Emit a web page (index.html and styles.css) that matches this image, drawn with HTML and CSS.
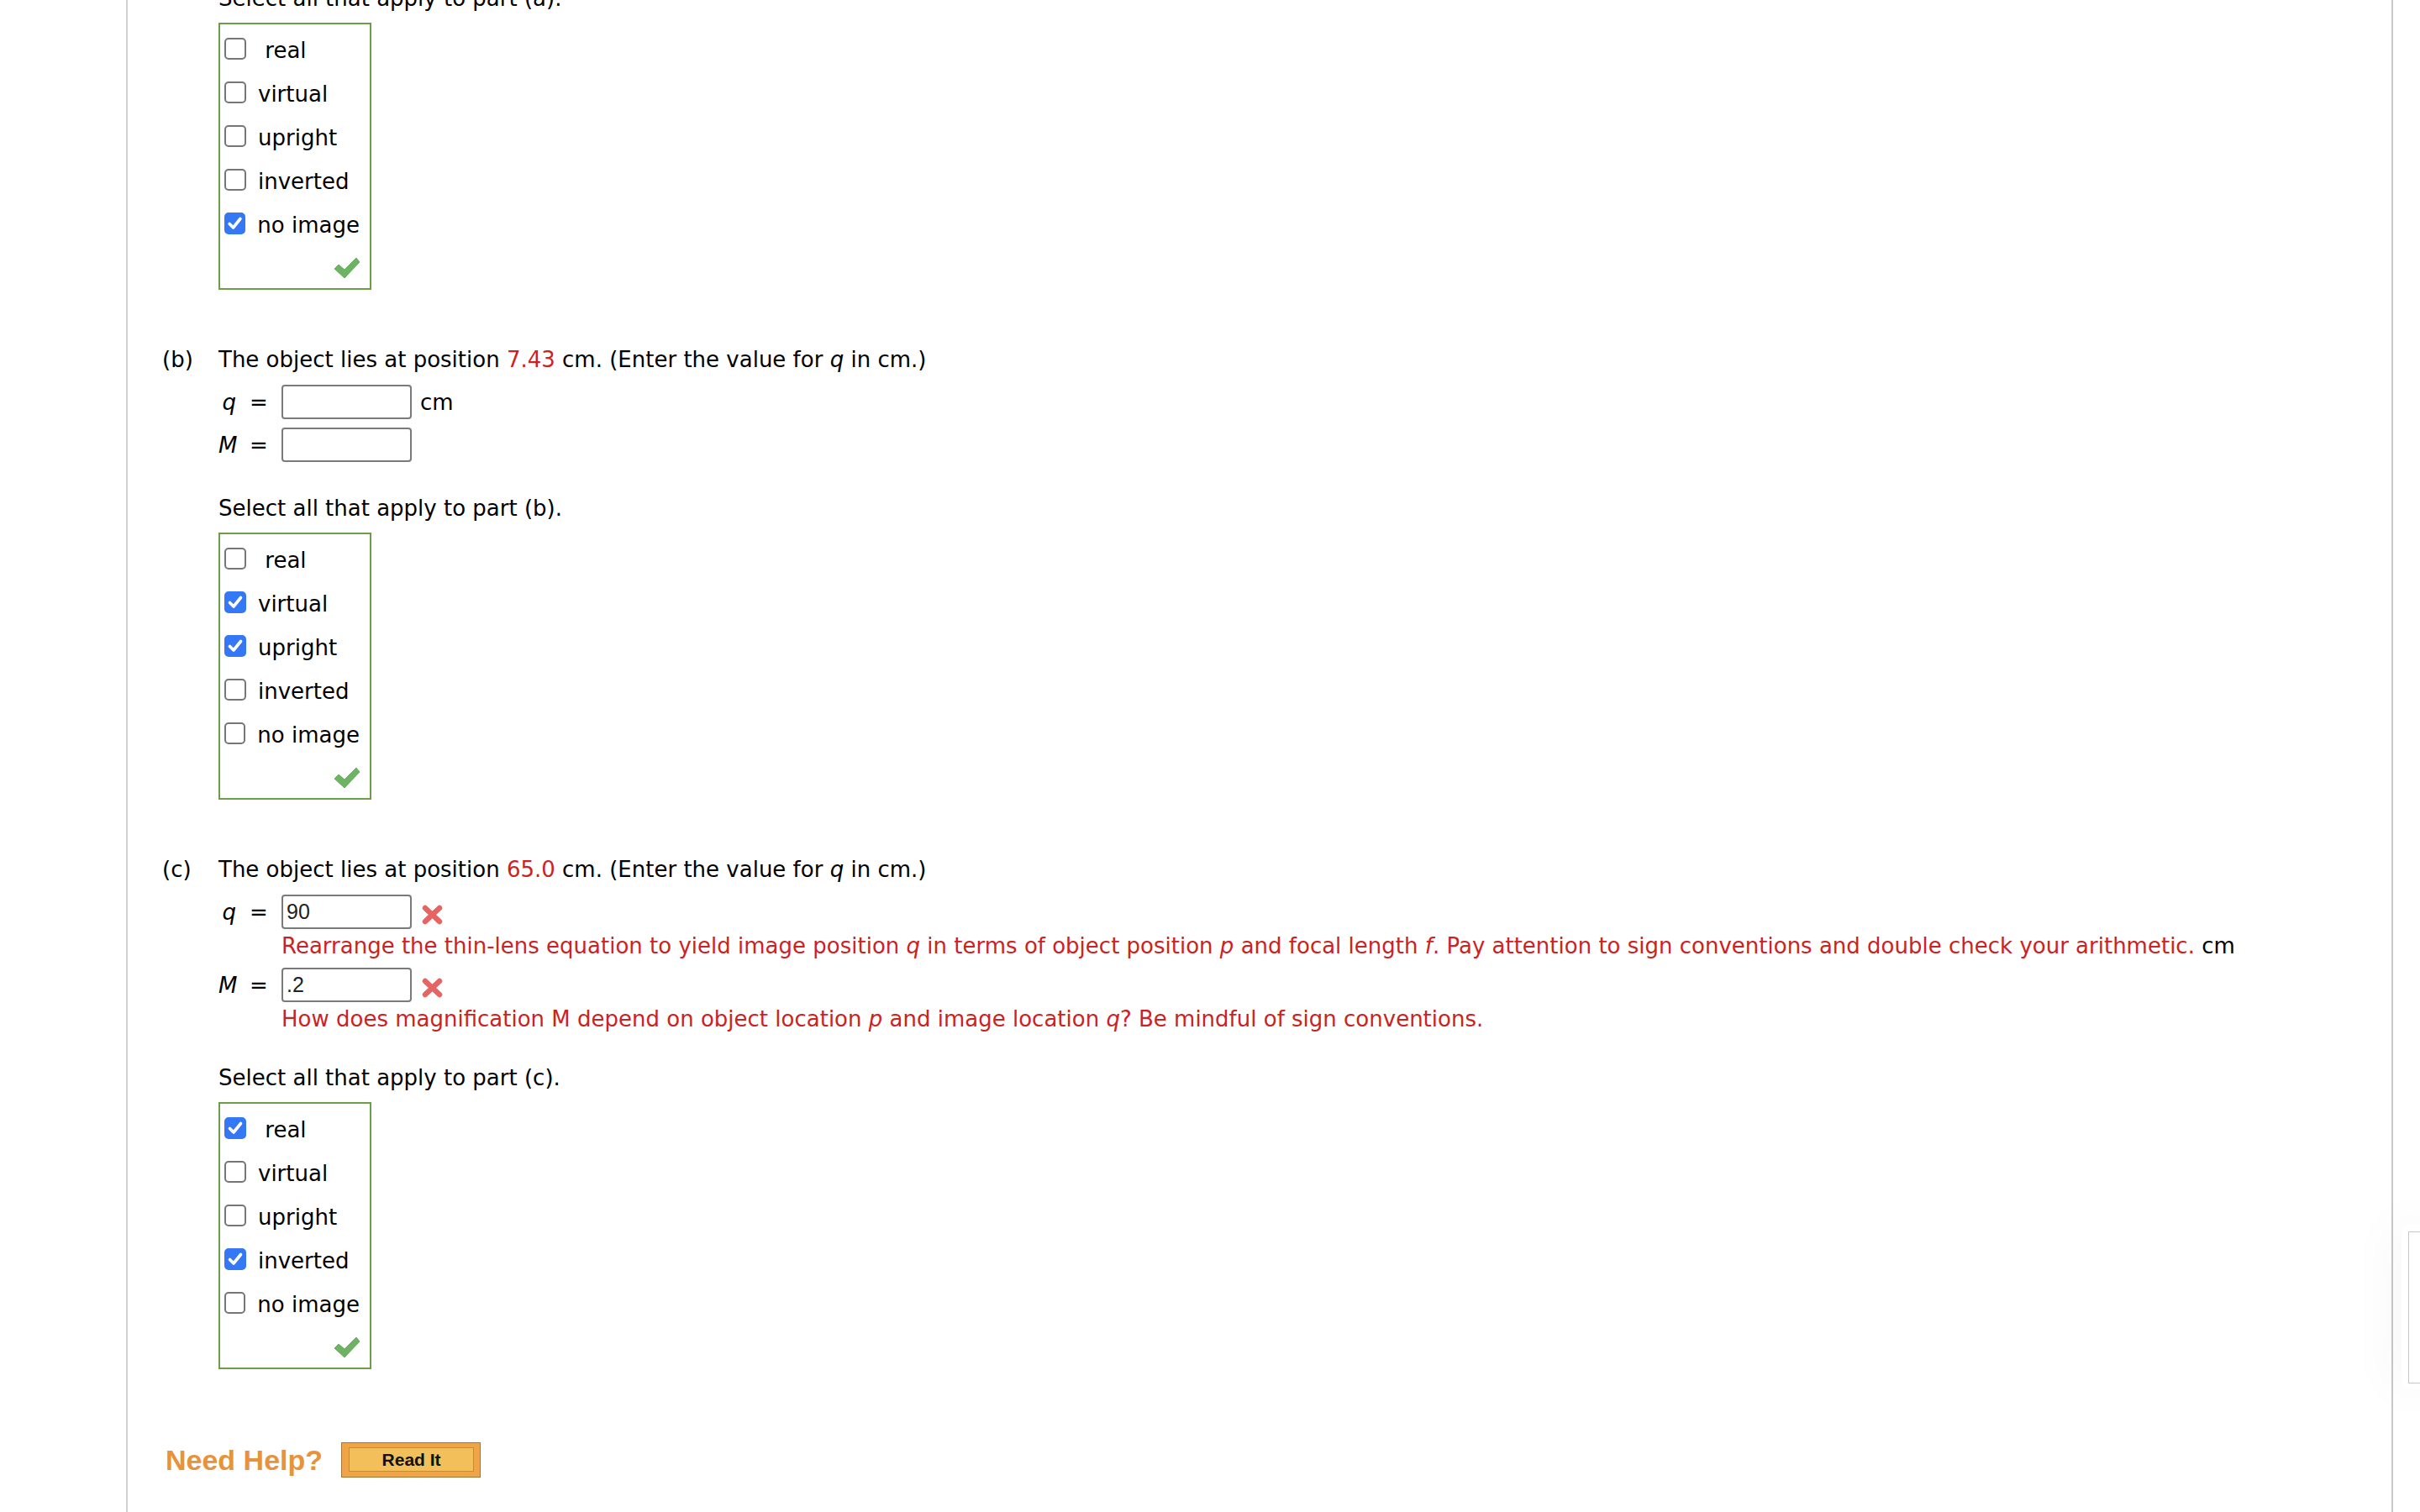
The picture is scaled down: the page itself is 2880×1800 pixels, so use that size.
FILE: index.html
```html
<!DOCTYPE html>
<html lang="en">
<head>
    <meta charset="UTF-8">
    <meta name="viewport" content="width=device-width, initial-scale=1.0">
    <title>Thin Lens - Images</title>
    <link rel="stylesheet" href="styles.css">
</head>
<body>
    <div class="page">

        <div class="part part-a">
            <div class="num"></div>
            <div class="body">
                <p class="line">Select all that apply to part (a).</p>
                <div class="choices">
                    <label class="choice"><input type="checkbox"><span>&nbsp;real</span></label>
                    <label class="choice"><input type="checkbox"><span>virtual</span></label>
                    <label class="choice"><input type="checkbox"><span>upright</span></label>
                    <label class="choice"><input type="checkbox"><span>inverted</span></label>
                    <label class="choice"><input type="checkbox" checked><span>no image</span></label>
                    <div class="mark-row">
                        <svg class="ok" width="30" height="25" viewBox="0 0 30 25"><path d="M0 14 L5 9 L12 15 L26 1 L30 6 L12 25 Z"/></svg>
                    </div>
                </div>
            </div>
        </div>

        <div class="part">
            <div class="num line">(b)</div>
            <div class="body">
                <p class="line">The object lies at position <span class="val">7.43</span> cm. (Enter the value for <i>q</i> in cm.)</p>
                <div class="answer">
                    <span class="var">q</span><span class="eq">=</span><input class="ans" type="text"><span class="unit">cm</span>
                </div>
                <div class="answer">
                    <span class="var">M</span><span class="eq">=</span><input class="ans" type="text">
                </div>
                <p class="line select">Select all that apply to part (b).</p>
                <div class="choices">
                    <label class="choice"><input type="checkbox"><span>&nbsp;real</span></label>
                    <label class="choice"><input type="checkbox" checked><span>virtual</span></label>
                    <label class="choice"><input type="checkbox" checked><span>upright</span></label>
                    <label class="choice"><input type="checkbox"><span>inverted</span></label>
                    <label class="choice"><input type="checkbox"><span>no image</span></label>
                    <div class="mark-row">
                        <svg class="ok" width="30" height="25" viewBox="0 0 30 25"><path d="M0 14 L5 9 L12 15 L26 1 L30 6 L12 25 Z"/></svg>
                    </div>
                </div>
            </div>
        </div>

        <div class="part">
            <div class="num line">(c)</div>
            <div class="body">
                <p class="line">The object lies at position <span class="val">65.0</span> cm. (Enter the value for <i>q</i> in cm.)</p>
                <div class="answer">
                    <span class="var">q</span><span class="eq">=</span><input class="ans" type="text" value="90">
                    <svg class="bad" width="27" height="26" viewBox="0 0 27 26"><path d="M5 5 L22 21 M22 5 L5 21"/></svg>
                </div>
                <p class="line hint">Rearrange the thin-lens equation to yield image position <i>q</i> in terms of object position <i>p</i> and focal length <i>f</i>. Pay attention to sign conventions and double check your arithmetic.<span class="unit-inline"> cm</span></p>
                <div class="answer">
                    <span class="var">M</span><span class="eq">=</span><input class="ans" type="text" value=".2">
                    <svg class="bad" width="27" height="26" viewBox="0 0 27 26"><path d="M5 5 L22 21 M22 5 L5 21"/></svg>
                </div>
                <p class="line hint">How does magnification M depend on object location <i>p</i> and image location <i>q</i>? Be mindful of sign conventions.</p>
                <p class="line select">Select all that apply to part (c).</p>
                <div class="choices">
                    <label class="choice"><input type="checkbox" checked><span>&nbsp;real</span></label>
                    <label class="choice"><input type="checkbox"><span>virtual</span></label>
                    <label class="choice"><input type="checkbox"><span>upright</span></label>
                    <label class="choice"><input type="checkbox" checked><span>inverted</span></label>
                    <label class="choice"><input type="checkbox"><span>no image</span></label>
                    <div class="mark-row">
                        <svg class="ok" width="30" height="25" viewBox="0 0 30 25"><path d="M0 14 L5 9 L12 15 L26 1 L30 6 L12 25 Z"/></svg>
                    </div>
                </div>
            </div>
        </div>

        <div class="help">
            <span class="help-text">Need Help?</span>
            <button class="read-it"><span>Read It</span></button>
        </div>
    </div>

    <div class="side-card"><div class="side-inner"></div></div>
</body>
</html>
```

FILE: styles.css
```css
html, body {
    overflow: hidden;
}
body {
    margin: 0;
    background: #fff;
    color: #000;
    font-family: "DejaVu Sans", Verdana, sans-serif;
    font-size: 26px;
}
.page {
    display: flow-root;
    margin-left: 150px;
    width: 2698px;
    min-height: 100vh;
    padding-left: 41px;
    box-sizing: border-box;
    border-left: 2px solid #d2d2d2;
    border-right: 2px solid #c8c8c8;
}
.line {
    margin: 0;
    line-height: 40px;
}
.part {
    display: grid;
    grid-template-columns: 67px 1fr;
}
.part + .part {
    margin-top: 63px;
}
.part-a {
    margin-top: -22px;
}
.val {
    color: #cc2222;
}

/* answer rows */
.answer {
    display: flex;
    align-items: center;
    height: 41px;
    margin-top: 10px;
}
.hint + .answer {
    margin-top: 6px;
}
.var {
    width: 21px;
    text-align: right;
    font-style: italic;
}
.eq {
    width: 54px;
    text-align: center;
}
.ans {
    width: 155px;
    height: 41px;
    box-sizing: border-box;
    margin: 0;
    padding: 0 4px;
    border: 2px solid #7a7a7a;
    border-radius: 4px;
    font-family: "Liberation Sans", Arial, sans-serif;
    font-size: 25px;
    color: #222;
    background: #fff;
}
.unit {
    margin-left: 10px;
}
.bad {
    margin-left: 11px;
    margin-top: 6px;
}
.bad path {
    stroke: #e56464;
    stroke-width: 6.5;
    stroke-linecap: round;
    fill: none;
}
.hint {
    margin-left: 75px;
    color: #cc2222;
}
.unit-inline {
    color: #000;
}
.select {
    margin-top: 35px;
}
.hint + .select {
    margin-top: 30px;
}

/* checkbox groups */
.choices {
    width: 182px;
    box-sizing: border-box;
    margin-top: 9px;
    padding: 5px 12px 12px 5px;
    border: 2px solid #6b9e47;
}
.choice {
    display: flex;
    align-items: center;
    gap: 14px;
    height: 52px;
    white-space: nowrap;
}
.choice input {
    appearance: none;
    -webkit-appearance: none;
    width: 26px;
    height: 26px;
    margin: 0 0 5px 0;
    border: 2px solid #767676;
    border-radius: 5px;
    background: #fff;
    box-sizing: border-box;
}
.choice input:checked {
    border-color: #3478f6;
    background: #3478f6 url("data:image/svg+xml,%3Csvg xmlns='http://www.w3.org/2000/svg' viewBox='0 0 26 26'%3E%3Cpath d='M6.5 13.5 L11 18 L19.5 7.5' fill='none' stroke='white' stroke-width='3.6' stroke-linecap='round' stroke-linejoin='round'/%3E%3C/svg%3E") center / 26px 26px no-repeat;
}
.mark-row {
    display: flex;
    justify-content: flex-end;
    margin-top: 12px;
    height: 25px;
}
.ok path {
    fill: #6cb462;
    stroke: #5aa151;
    stroke-width: 0.8;
}

/* need help */
.help {
    display: flex;
    align-items: center;
    gap: 22px;
    margin-top: 87px;
    padding-left: 4px;
}
.help-text {
    font-family: "Liberation Sans", Arial, sans-serif;
    font-weight: bold;
    font-size: 34px;
    color: #e8923b;
}
.read-it {
    width: 166px;
    height: 42px;
    padding: 5px 7px 6px 8px;
    box-sizing: border-box;
    border: 1px solid #a97536;
    background: #f0a448;
    cursor: pointer;
}
.read-it span {
    display: block;
    height: 29px;
    line-height: 27px;
    box-sizing: border-box;
    border: 1px solid #c48a3e;
    background: #f3bf5b;
    font-family: "Liberation Sans", Arial, sans-serif;
    font-weight: bold;
    font-size: 21px;
    color: #111;
    text-align: center;
}

/* card peeking in at the right edge */
.side-card {
    position: absolute;
    top: 1458px;
    right: 0;
    width: 22px;
    height: 195px;
    padding: 8px 0 8px 8px;
    box-sizing: border-box;
    background: #fff;
    border-radius: 10px 0 0 10px;
    box-shadow: 0 0 60px rgba(0, 0, 0, 0.08);
}
.side-inner {
    height: 100%;
    border: 1px solid #c8c8c8;
    border-right: none;
}
```
